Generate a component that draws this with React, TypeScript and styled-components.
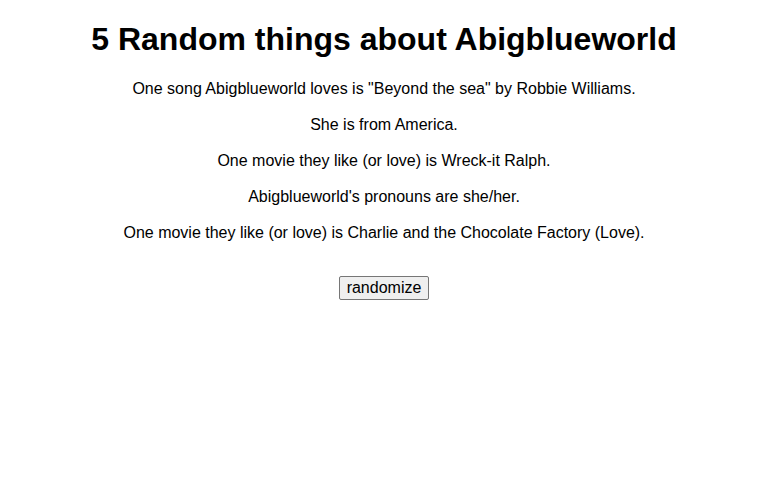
import React, { useState } from 'react';
import styled, { createGlobalStyle } from 'styled-components';

const facts = [
  'One song Abigblueworld loves is "Beyond the sea" by Robbie Williams.',
  'She is from America.',
  'One movie they like (or love) is Wreck-it Ralph.',
  "Abigblueworld's pronouns are she/her.",
  'One movie they like (or love) is Charlie and the Chocolate Factory (Love).',
];

const shuffle = (list: string[]) => {
  const copy = [...list];
  for (let i = copy.length - 1; i > 0; i--) {
    const j = Math.floor(Math.random() * (i + 1));
    [copy[i], copy[j]] = [copy[j], copy[i]];
  }
  return copy;
};

export default function App() {
  const [items, setItems] = useState(facts);

  return (
    <>
      <GlobalStyle />
      <Page>
        <Title>5 Random things about Abigblueworld</Title>
        <FactList>
          {items.map((fact) => (
            <Fact key={fact}>{fact}</Fact>
          ))}
        </FactList>
        <RandomizeButton onClick={() => setItems(shuffle(facts))}>
          randomize
        </RandomizeButton>
      </Page>
    </>
  );
}

const GlobalStyle = createGlobalStyle`
  body {
    margin: 0;
    background: #fff;
    color: #000;
    font-family: "Liberation Sans", Arial, sans-serif;
  }
`;

const Page = styled.div`
  display: flex;
  flex-direction: column;
  align-items: center;
  padding: 21px 8px 0;
  text-align: center;
`;

const Title = styled.h1`
  margin: 0;
  font-size: 32px;
  font-weight: bold;
  line-height: 37px;
`;

const FactList = styled.div`
  display: flex;
  flex-direction: column;
  gap: 16px;
  margin-top: 21px;
`;

const Fact = styled.p`
  margin: 0;
  font-size: 16px;
  line-height: 20px;
`;

const RandomizeButton = styled.button`
  margin-top: 33px;
  padding: 1px 7px;
  font-family: "Liberation Sans", Arial, sans-serif;
  font-size: 16px;
  line-height: 20px;
  color: #000;
  background: #efefef;
  border: 1px solid #767676;
  border-radius: 2px;
  cursor: pointer;

  &:hover {
    background: #e5e5e5;
  }
`;
